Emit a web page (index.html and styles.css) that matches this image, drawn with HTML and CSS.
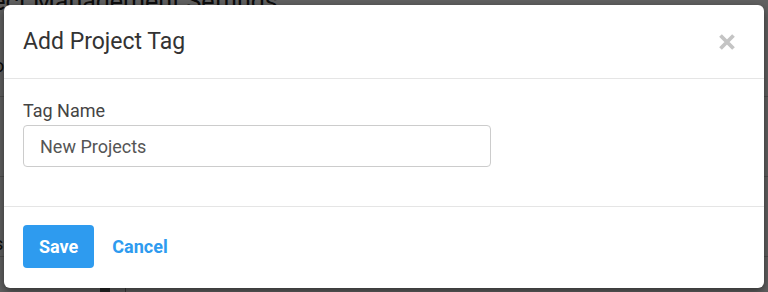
FILE: index.html
```html
<!DOCTYPE html>
<html lang="en">
<head>
  <meta charset="UTF-8">
  <meta name="viewport" content="width=device-width, initial-scale=1.0">
  <title>Add Project Tag</title>
  <link rel="stylesheet" href="styles.css">
</head>
<body>

  <!-- 뒤쪽 페이지 -->
  <div class="page">
    <h1 class="page_title">Project Management Settings</h1>
    <div class="page_row"><span class="side_txt">o</span></div>
    <div class="page_row"></div>
    <div class="page_row"><span class="side_txt">s</span></div>
    <div class="page_cols">
      <span class="col_block"></span>
      <span class="col_line"></span>
    </div>
  </div>

  <!-- 오버레이 -->
  <div class="overlay"></div>

  <!-- 모달 -->
  <div class="modal">
    <div class="modal_header">
      <h2 class="modal_title">Add Project Tag</h2>
      <button class="modal_close" type="button" aria-label="Close">
        <svg width="20" height="20" viewBox="0 0 20 20">
          <path d="M3.5 3.5 L16.5 16.5 M16.5 3.5 L3.5 16.5" stroke="currentColor" stroke-width="3.8"/>
        </svg>
      </button>
    </div>

    <div class="modal_body">
      <label class="field_label" for="tag-name">Tag Name</label>
      <input id="tag-name" class="field_input" type="text" value="New Projects">
    </div>

    <div class="modal_footer">
      <button class="btn_save" type="button">Save</button>
      <a class="btn_cancel" href="#">Cancel</a>
    </div>
  </div>

</body>
</html>
```

FILE: styles.css
```css
:root {
    --en-font: Roboto, "Liberation Sans", Arial, sans-serif;
    --bk-font: #333;
    --blue: #2e9bef;
    --line: #e5e5e5;
}

* {box-sizing: border-box;}
html, body {margin: 0; padding: 0;}
body {font-family: var(--en-font); width: 768px; height: 292px; overflow: hidden; background: #fff; position: relative;}

/* page behind */
.page {height: 292px; overflow: hidden;}
.page_title {margin: -13px 0 0 -52px; font-size: 25px; font-weight: 400; color: #222; line-height: 30px; white-space: nowrap;}
.page_row {height: 80px; border-bottom: 1px solid #ccc; font-size: 18px; color: #222;}
.side_txt {display: inline-block; margin-top: 38px; margin-left: -6px;}
.page_row:nth-child(4) .side_txt {margin-top: 56px;}
.page_cols {display: flex; gap: 15px; padding-left: 100px; height: 40px; margin-top: 10px;}
.col_block {width: 10px; height: 100%; background: #666;}
.col_line {width: 1px; height: 100%; background: #999;}

/* overlay */
.overlay {position: absolute; inset: 0; background: rgba(0, 0, 0, 0.62);}

/* modal */
.modal {position: absolute; left: 4px; top: 5px; width: 760px; height: 283px; background: #fff; border-radius: 6px; box-shadow: 0 3px 9px rgba(0, 0, 0, 0.5); display: flex; flex-direction: column;}

.modal_header {display: flex; justify-content: space-between; align-items: center; height: 74px; padding: 0 27px 0 19px; border-bottom: 1px solid var(--line);}
.modal_title {margin: 0; font-size: 23px; font-weight: 400; color: var(--bk-font);}
.modal_close {border: 0; background: none; padding: 0; color: #c4c4c4; display: flex; cursor: pointer;}

.modal_body {height: 128px; padding: 20px 19px 0; border-bottom: 1px solid var(--line);}
.field_label {display: block; font-size: 18px; color: #444; line-height: 24px; margin-bottom: 2px;}
.field_input {display: block; width: 468px; height: 42px; border: 1px solid #ccc; border-radius: 4px; padding: 0 16px; font-family: var(--en-font); font-size: 18px; color: #555; outline: none;}

.modal_footer {flex: 1; display: flex; align-items: center; gap: 18px; padding: 0 19px 2px;}
.btn_save {height: 43px; padding: 0 16px; border: 0; border-radius: 4px; background: var(--blue); color: #fff; font-family: var(--en-font); font-size: 18px; font-weight: 700;}
.btn_cancel {color: var(--blue); font-size: 18px; font-weight: 700; text-decoration: none;}
```
